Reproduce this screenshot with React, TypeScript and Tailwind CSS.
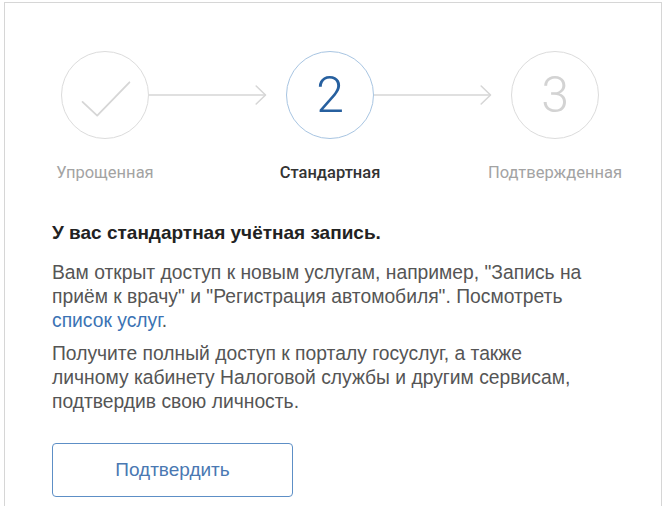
import React from 'react';

type StepState = 'done' | 'active' | 'todo';

interface Step {
    label: string;
    state: StepState;
    num: number;
}

const steps: Step[] = [
    { label: 'Упрощенная', state: 'done', num: 1 },
    { label: 'Стандартная', state: 'active', num: 2 },
    { label: 'Подтвержденная', state: 'todo', num: 3 },
];

/** Circle marker for a single step. */
function StepCircle({ step }: { step: Step }) {
    const ring = step.state === 'active' ? 'border-[#a8c5e2]' : 'border-[#dcdcdc]';
    return (
        <div className={`w-[88px] h-[88px] shrink-0 rounded-full border-[1.5px] ${ring} flex items-center justify-center`}>
            {step.state === 'done' ? (
                <svg width="88" height="88" viewBox="0 0 88 88" fill="none" stroke="#d6d6d6" strokeWidth="1.8" strokeLinecap="round" strokeLinejoin="round">
                    <path d="M21 51l15 14 33-34" />
                </svg>
            ) : (
                <span
                    className={`font-['Roboto',sans-serif] font-light text-[50px] leading-none ${step.state === 'active' ? 'text-[#27609f]' : 'text-[#d3d3d3]'}`}
                >
                    {step.num}
                </span>
            )}
        </div>
    );
}

/** Thin gray connector with an open arrow head. */
function Connector() {
    return (
        <div className="flex-1 flex items-center pr-[19px]">
            <svg className="w-full h-[24px]" viewBox="0 0 120 24" preserveAspectRatio="none" fill="none" stroke="#d6d6d6" strokeWidth="1.6" strokeLinecap="round" strokeLinejoin="round">
                <path d="M0 12h118" />
                <path d="M109 3l9.5 9-9.5 9" />
            </svg>
        </div>
    );
}

export default function App() {
    return (
        <div className="w-[667px] h-[516px] bg-white pt-[2px] pl-[4px] pr-[5px] font-['Liberation_Sans',Arial,sans-serif]">
            <div className="h-[504px] border-t border-l border-r border-[#d6d6d6]">
                {/* Stepper */}
                <div className="ml-[56px] w-[538px] mt-[48px] flex items-center">
                    <StepCircle step={steps[0]} />
                    <Connector />
                    <StepCircle step={steps[1]} />
                    <Connector />
                    <StepCircle step={steps[2]} />
                </div>
                <div className="ml-[56px] w-[538px] mt-[26px] flex justify-between">
                    {steps.map(s => (
                        <div key={s.label} className="w-[88px] flex justify-center">
                            <span
                                className={`whitespace-nowrap text-[16.5px] leading-[16px] font-['Roboto',sans-serif] ${s.state === 'active' ? 'text-[#333333] font-medium' : 'text-[#a3a3a3]'}`}
                            >
                                {s.label}
                            </span>
                        </div>
                    ))}
                </div>

                {/* Body */}
                <div className="pl-[47px] mt-[42px]">
                    <h2 className="text-[19px] leading-[20px] font-bold text-[#222222]">
                        У вас стандартная учётная запись.
                    </h2>
                    <p className="mt-[18px] w-[548px] text-[19.3px] leading-[24px] text-[#555555]">
                        Вам открыт доступ к новым услугам, например, "Запись на приём к врачу" и "Регистрация автомобиля". Посмотреть{' '}
                        <a href="#" className="text-[#3b73b4]">список услуг</a>.
                    </p>
                    <p className="mt-[9px] w-[548px] text-[19.3px] leading-[24px] text-[#555555]">
                        Получите полный доступ к порталу госуслуг, а также личному кабинету Налоговой службы и другим сервисам, подтвердив свою личность.
                    </p>
                    <button className="mt-[29px] w-[241px] h-[54px] rounded-[4px] border-[1.5px] border-[#5d8fc6] text-[19px] text-[#4a78b2]">
                        Подтвердить
                    </button>
                </div>
            </div>
        </div>
    );
}
